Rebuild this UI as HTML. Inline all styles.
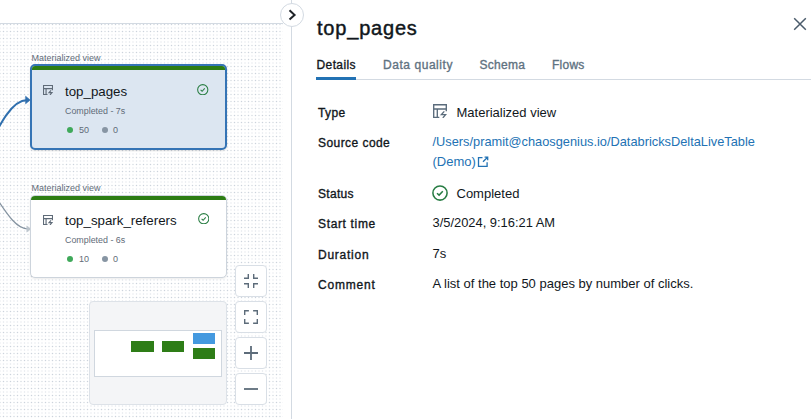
<!DOCTYPE html>
<html><head><meta charset="utf-8">
<style>
*{box-sizing:border-box;margin:0;padding:0}
html,body{width:811px;height:419px;overflow:hidden;background:#fff;font-family:"Liberation Sans",sans-serif;color:#11171c}
.abs{position:absolute}
#canvas{position:absolute;left:0;top:23px;width:283px;height:396px;border-top:1px solid #d3dae2;overflow:hidden}
#canvas svg.grid{position:absolute;left:0;top:-1px}
.sep{position:absolute;left:291px;top:0;width:1px;height:419px;background:#d3dae2}
.circ{position:absolute;left:280px;top:3px;width:24px;height:24px;border-radius:50%;border:1px solid #d3dae2;background:#fff}
.lbl{position:absolute;font-size:9px;color:#5f6b78;white-space:nowrap;line-height:1}
.node{position:absolute;background:#fff;border-radius:5px;overflow:hidden}
.node .bar{position:absolute;left:0;top:0;right:0;height:4px;background:#2d7d13}
.node .title{position:absolute;font-size:13.3px;white-space:nowrap;line-height:1;color:#11171c}
.node .sub{position:absolute;font-size:8.9px;white-space:nowrap;line-height:1;color:#5f6b78}
.node .cnt{position:absolute;font-size:9px;white-space:nowrap;line-height:1;color:#5f6b78}
.dot{position:absolute;width:6px;height:6px;border-radius:50%}
.btn{position:absolute;left:235px;width:32px;height:32px;border:1px solid #d9dfe6;border-radius:4px;background:#fff}
.tab{position:absolute;top:58.5px;font-size:12px;font-weight:400;color:#5f7281;-webkit-text-stroke:0.35px #5f7281;white-space:nowrap;line-height:1}
.k{position:absolute;left:318px;font-size:12px;font-weight:400;-webkit-text-stroke:0.35px #11171c;white-space:nowrap;line-height:1;color:#11171c}
.v{position:absolute;left:432.5px;font-size:13px;white-space:nowrap;line-height:1;color:#11171c}
</style></head><body>

<div id="canvas">
<svg class="grid" width="283" height="397">
<defs>
<pattern id="dp" x="0" y="0" width="7" height="7" patternUnits="userSpaceOnUse">
<circle cx="3.5" cy="1.5" r="0.75" fill="#ccd3dc"/>
<circle cx="0" cy="1.5" r="0.75" fill="#d4dae1"/>
<circle cx="7" cy="1.5" r="0.75" fill="#d4dae1"/>
<circle cx="3.5" cy="5" r="0.75" fill="#e2e6eb"/>
<circle cx="0" cy="5" r="0.75" fill="#e6e9ee"/>
<circle cx="7" cy="5" r="0.75" fill="#e6e9ee"/>
</pattern>
</defs>
<rect x="0" y="0" width="283" height="397" fill="url(#dp)"/>
</svg>
</div>

<!-- edges -->
<svg class="abs" style="left:0;top:0" width="282" height="419">
<path d="M-51.3 195.2 C-21.9 195.2 -2.4 100 27 100" fill="none" stroke="#2f6fae" stroke-width="2"/>
<path d="M25.6 96.2 L30.2 100 L25.6 103.8 Z" fill="#2f6fae" stroke="#2f6fae" stroke-width="0.6" stroke-linejoin="round"/>
<path d="M-32.2 171.5 C-10 171.5 5.8 229 28 229" fill="none" stroke="#8593a0" stroke-width="1.2"/>
<path d="M26.8 225.9 L30.8 229 L26.8 232.1 Z" fill="#bcc4cd" stroke="#bcc4cd" stroke-width="0.6" stroke-linejoin="round"/>
</svg>

<div class="lbl" style="left:31.5px;top:54.4px">Materialized view</div>
<div class="lbl" style="left:31.5px;top:184.4px">Materialized view</div>

<!-- node 1 -->
<div class="node" style="left:30px;top:64px;width:197px;height:85.5px;background:#dce6f1;border:2px solid #3574b5;box-shadow:0 1px 2px rgba(0,0,0,0.12);">
  <div class="bar" style="top:0"></div>
  <svg class="abs" style="left:11px;top:19px" width="10" height="10" viewBox="0 0 14 14"><path d="M6.3 13.3 H0.7 V0.7 H13.3 V7.3 M0.7 5 H13.3 M4.3 5 V13.3 M11.3 7.4 L8.4 10.6 H12.6 L9.8 13.9" fill="none" stroke="#5f6b78" stroke-width="1.6" stroke-linejoin="miter"/></svg>
  <div class="title" style="left:33px;top:18.5px">top_pages</div>
  <svg class="abs" style="left:165px;top:17.5px" width="11.5" height="11.5" viewBox="0 0 16 16"><circle cx="8" cy="8" r="7.1" fill="none" stroke="#2b7f45" stroke-width="1.5"/><path d="M5 8.2 L7.1 10.1 L10.8 6.2" fill="none" stroke="#2b7f45" stroke-width="1.5"/></svg>
  <div class="sub" style="left:33px;top:41px">Completed - 7s</div>
  <div class="dot" style="left:35px;top:61px;background:#3fa95a"></div><div class="cnt" style="left:47px;top:59.5px">50</div>
  <div class="dot" style="left:69.5px;top:61px;background:#8795a3"></div><div class="cnt" style="left:81px;top:59.5px">0</div>
</div>
<!-- node 2 -->
<div class="node" style="left:30px;top:195px;width:197px;height:83px;border:1px solid #cdd4dc;box-shadow:0 1px 2px rgba(0,0,0,0.08)">
  <div class="bar" style="top:0"></div>
  <svg class="abs" style="left:12px;top:19px" width="10" height="10" viewBox="0 0 14 14"><path d="M6.3 13.3 H0.7 V0.7 H13.3 V7.3 M0.7 5 H13.3 M4.3 5 V13.3 M11.3 7.4 L8.4 10.6 H12.6 L9.8 13.9" fill="none" stroke="#5f6b78" stroke-width="1.6" stroke-linejoin="miter"/></svg>
  <div class="title" style="left:34px;top:17.5px">top_spark_referers</div>
  <svg class="abs" style="left:166.5px;top:16.7px" width="11.5" height="11.5" viewBox="0 0 16 16"><circle cx="8" cy="8" r="7.1" fill="none" stroke="#2b7f45" stroke-width="1.5"/><path d="M5 8.2 L7.1 10.1 L10.8 6.2" fill="none" stroke="#2b7f45" stroke-width="1.5"/></svg>
  <div class="sub" style="left:34px;top:40px">Completed - 6s</div>
  <div class="dot" style="left:36px;top:60px;background:#3fa95a"></div><div class="cnt" style="left:48px;top:58.5px">10</div>
  <div class="dot" style="left:70.5px;top:60px;background:#8795a3"></div><div class="cnt" style="left:82px;top:58.5px">0</div>
</div>

<!-- controls -->
<div class="btn" style="top:265px"></div>
<svg class="abs" style="left:243px;top:273px" width="16" height="16" viewBox="0 0 16 16"><path d="M5.3 1 V5.3 H1 M10.7 1 V5.3 H15 M1 10.7 H5.3 V15 M15 10.7 H10.7 V15" fill="none" stroke="#5d6c7a" stroke-width="1.4"/></svg>
<div class="btn" style="top:301px"></div>
<svg class="abs" style="left:243px;top:309px" width="16" height="16" viewBox="0 0 16 16"><path d="M1.7 5.9 V1.7 H5.9 M10.1 1.7 H14.3 V5.9 M1.7 10.1 V14.3 H5.9 M14.3 10.1 V14.3 H10.1" fill="none" stroke="#5d6c7a" stroke-width="1.4"/></svg>
<div class="btn" style="top:337px"></div>
<svg class="abs" style="left:243px;top:345px" width="16" height="16" viewBox="0 0 16 16"><path d="M8 1 V15 M1 8 H15" fill="none" stroke="#5d6c7a" stroke-width="1.8"/></svg>
<div class="btn" style="top:373px"></div>
<svg class="abs" style="left:243px;top:381px" width="16" height="16" viewBox="0 0 16 16"><path d="M1 8 H15" fill="none" stroke="#5d6c7a" stroke-width="1.8"/></svg>

<!-- minimap -->
<div class="abs" style="left:89px;top:301px;width:138px;height:104px;background:#f4f5f7;border:1px solid #dde2e8;border-radius:4px"></div>
<div class="abs" style="left:93.5px;top:329.5px;width:128.5px;height:47px;background:#fff;border:1.5px solid #d0d7df"></div>
<div class="abs" style="left:131px;top:341px;width:23px;height:11px;background:#2e7d17"></div>
<div class="abs" style="left:162px;top:341px;width:22px;height:11px;background:#2e7d17"></div>
<div class="abs" style="left:193px;top:333px;width:22px;height:11px;background:#4499df"></div>
<div class="abs" style="left:193px;top:348px;width:22px;height:11px;background:#2e7d17"></div>

<!-- sep & button -->
<div class="sep"></div>
<div class="circ"></div>
<svg class="abs" style="left:285px;top:8px" width="14" height="14" viewBox="0 0 14 14">
<path d="M4.5 2.2 L9.6 6.9 L4.5 11.6" fill="none" stroke="#1f2328" stroke-width="2"/>
</svg>

<!-- right panel -->
<div class="abs" style="left:317px;top:18px;font-size:20px;font-weight:400;-webkit-text-stroke:0.45px #11171c;letter-spacing:0.8px;line-height:1;white-space:nowrap;color:#11171c">top_pages</div>
<svg class="abs" style="left:793px;top:17px" width="14" height="14" viewBox="0 0 14 14">
<path d="M1.2 1.2 L12.8 12.8 M12.8 1.2 L1.2 12.8" stroke="#4a5b6b" stroke-width="1.5"/>
</svg>

<div class="tab" style="left:316.5px;color:#11171c;-webkit-text-stroke-color:#11171c;letter-spacing:0.4px">Details</div>
<div class="tab" style="left:383px;letter-spacing:0.55px">Data quality</div>
<div class="tab" style="left:479.5px;letter-spacing:0.3px">Schema</div>
<div class="tab" style="left:552px;letter-spacing:0.25px">Flows</div>
<div class="abs" style="left:316px;top:79px;width:495px;height:1px;background:#d3dae2"></div>
<div class="abs" style="left:316px;top:77px;width:40px;height:3px;background:#2272b4"></div>

<div class="k" style="top:107px;letter-spacing:0.4px">Type</div>
<div class="k" style="top:137px;letter-spacing:0.44px">Source code</div>
<div class="k" style="top:188px;letter-spacing:0.3px">Status</div>
<div class="k" style="top:218px;letter-spacing:0.65px">Start time</div>
<div class="k" style="top:249px;letter-spacing:0.75px">Duration</div>
<div class="k" style="top:279px;letter-spacing:0.8px">Comment</div>

<svg class="abs" style="left:433px;top:104px" width="14" height="14" viewBox="0 0 14 14"><path d="M6.3 13.3 H0.7 V0.7 H13.3 V7.3 M0.7 5 H13.3 M4.3 5 V13.3 M11.3 7.4 L8.4 10.6 H12.6 L9.8 13.9" fill="none" stroke="#5a6b7b" stroke-width="1.35" stroke-linejoin="miter"/></svg>
<div class="v" style="left:456.5px;top:105.5px">Materialized view</div>
<div class="v" style="top:135.5px;color:#2272b4;font-size:12.8px">/Users/pramit@chaosgenius.io/DatabricksDeltaLiveTable</div>
<div class="v" style="top:155px;color:#2272b4">(Demo)</div>
<svg class="abs" style="left:477px;top:155.5px" width="12" height="12" viewBox="0 0 12 12"><path d="M5.5 1.7 H1.5 V10.3 H10.1 V6.3 M6 5.8 L10.6 1.2 M7.6 1.1 H10.7 V4.2" fill="none" stroke="#2272b4" stroke-width="1.3"/></svg>
<svg class="abs" style="left:432px;top:184.5px" width="16" height="16" viewBox="0 0 16 16"><circle cx="8" cy="8" r="7.1" fill="none" stroke="#277c43" stroke-width="1.55"/><path d="M5 8.2 L7.1 10.1 L10.8 6.2" fill="none" stroke="#277c43" stroke-width="1.5"/></svg>
<div class="v" style="left:456.5px;top:186.5px">Completed</div>
<div class="v" style="top:216.5px;font-size:12.9px">3/5/2024, 9:16:21 AM</div>
<div class="v" style="top:247px">7s</div>
<div class="v" style="top:277px">A list of the top 50 pages by number of clicks.</div>

</body></html>
